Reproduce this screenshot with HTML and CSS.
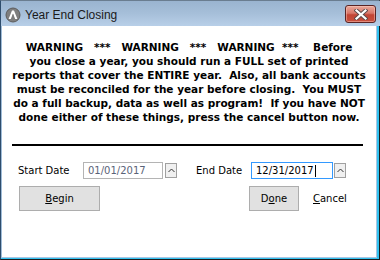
FILE: index.html
```html
<!DOCTYPE html>
<html>
<head>
<meta charset="utf-8">
<link rel="stylesheet" href="styles.css">
</head>
<body>
<div class="window">
  <div class="titlebar">
    <svg class="appicon" width="16" height="16" viewBox="0 0 16 16">
      <circle cx="8" cy="8" r="7" fill="#7e7e7e" stroke="#5c5c5c" stroke-width="1"/>
      <path d="M3.6 12 L7 3.6 L9 3.6 L12.4 12 L10.2 12 L8 6.6 L5.8 12 Z" fill="#ffffff"/>
      <path d="M8 7.5 L8 12" stroke="#7e7e7e" stroke-width="1"/>
    </svg>
    <span class="title">Year End Closing</span>
    <div class="closebtn">
      <svg width="14" height="11" viewBox="0 0 14 11">
        <path d="M2.5 1.5 L11.5 9.5 M11.5 1.5 L2.5 9.5" stroke="#5a4a4a" stroke-width="4" stroke-linecap="square"/>
        <path d="M2.5 1.5 L11.5 9.5 M11.5 1.5 L2.5 9.5" stroke="#ffffff" stroke-width="2.2" stroke-linecap="square"/>
      </svg>
    </div>
  </div>
  <div class="client">
    <div class="warning">WARNING   ***   WARNING   ***   WARNING  ***    Before
you close a year, you should run a FULL set of printed
reports that cover the ENTIRE year.  Also, all bank accounts
must be reconciled for the year before closing.  You MUST
do a full backup, data as well as program!  If you have NOT
done either of these things, press the cancel button now.</div>
    <div class="rule"></div>
    <div class="row dates">
      <span class="lbl lbl-start">Start Date</span>
      <div class="box box-start">01/01/2017</div>
      <div class="spin"><svg width="7" height="5" viewBox="0 0 7 5"><path d="M0.5 4 L3.5 1 L6.5 4" fill="none" stroke="#333" stroke-width="1"/></svg></div>
      <span class="lbl lbl-end">End Date</span>
      <div class="box box-end">12/31/2017<span class="caret"></span></div>
      <div class="spin spin-end"><svg width="7" height="5" viewBox="0 0 7 5"><path d="M0.5 4 L3.5 1 L6.5 4" fill="none" stroke="#333" stroke-width="1"/></svg></div>
    </div>
    <div class="row buttons">
      <div class="btn btn-begin"><u>B</u>egin</div>
      <div class="btn btn-done">D<u>o</u>ne</div>
      <div class="link-cancel"><u>C</u>ancel</div>
    </div>
  </div>
</div>
</body>
</html>
```

FILE: styles.css
```css
html, body {
  margin: 0;
  padding: 0;
  width: 380px;
  height: 260px;
  overflow: hidden;
  background: #ffffff;
}

.window {
  width: 380px;
  height: 260px;
  box-sizing: border-box;
  display: flex;
  flex-direction: column;
  background: #33c2f0;
  border-top: 1px solid #6a7d90;
  border-left: 1px solid #2e4d6c;
  border-right: 1px solid #1c1c1c;
  border-bottom: 1px solid #1c1c1c;
}

.titlebar {
  height: 25px;
  flex: none;
  display: flex;
  align-items: center;
  position: relative;
  background: linear-gradient(to bottom, #9ab4d0 0%, #a6bfd9 50%, #b8cfe8 100%);
  margin-right: -1px;
}

.appicon {
  margin-left: 4px;
  margin-top: 2px;
  flex: none;
}

.title {
  margin-left: 4px;
  margin-top: 2px;
  font-family: "Liberation Sans", Arial, sans-serif;
  font-size: 12px;
  color: #1a1a1a;
}

.closebtn {
  position: absolute;
  right: 4px;
  top: 4px;
  width: 29px;
  height: 16px;
  border: 1px solid #5a2424;
  border-radius: 3px;
  background: linear-gradient(to bottom, #e9a99a 0%, #d9776a 45%, #c24535 55%, #c8503e 100%);
  display: flex;
  align-items: center;
  justify-content: center;
  box-shadow: inset 0 0 0 1px rgba(255, 210, 200, 0.45);
}

.client {
  flex: 1;
  background: #ffffff;
  border-left: 1px solid #9fbcd8;
  border-right: 1px solid #aac6e2;
  border-bottom: 1px solid #aac6e2;
  margin-right: 2px;
  margin-bottom: 1px;
  display: flex;
  flex-direction: column;
}

.warning {
  margin-top: 14px;
  white-space: pre;
  text-align: center;
  font-family: "DejaVu Sans", Verdana, sans-serif;
  font-weight: bold;
  font-size: 10.5px;
  line-height: 14px;
  letter-spacing: 0;
  color: #000000;
}

.rule {
  margin: 20px 0 0 10px;
  width: 351px;
  height: 2px;
  background: #000000;
}

.row {
  display: flex;
  align-items: center;
  font-family: "DejaVu Sans", Verdana, sans-serif;
  font-size: 10px;
  color: #000000;
}

.dates {
  margin-top: 16px;
  height: 17px;
}

.lbl-start {
  margin-left: 16px;
  width: 65px;
}

.lbl-end {
  margin-left: 19px;
  width: 55px;
}

.box {
  height: 17px;
  box-sizing: border-box;
  display: flex;
  align-items: center;
  padding-left: 4px;
  font-size: 10px;
}

.box-start {
  width: 80px;
  border: 1px solid #b4b4b4;
  color: #5a6378;
}

.box-end {
  width: 82px;
  border: 1px solid #3399ff;
  color: #000000;
}

.caret {
  display: inline-block;
  width: 1px;
  height: 12px;
  background: #000000;
  margin-left: 1px;
}

.spin {
  margin-left: 2px;
  width: 12px;
  height: 15px;
  box-sizing: border-box;
  border: 1px solid #a0a0a0;
  background: #f0f0f0;
  display: flex;
  align-items: center;
  justify-content: center;
}

.spin-end {
  margin-left: 1px;
}

.buttons {
  margin-top: 7px;
  height: 25px;
}

.btn {
  height: 25px;
  box-sizing: border-box;
  border: 1px solid #adadad;
  background: #e1e1e1;
  display: flex;
  align-items: center;
  justify-content: center;
}

.btn-begin {
  margin-left: 17px;
  width: 81px;
}

.btn-done {
  margin-left: 149px;
  width: 50px;
}

.link-cancel {
  margin-left: 14px;
}
```
